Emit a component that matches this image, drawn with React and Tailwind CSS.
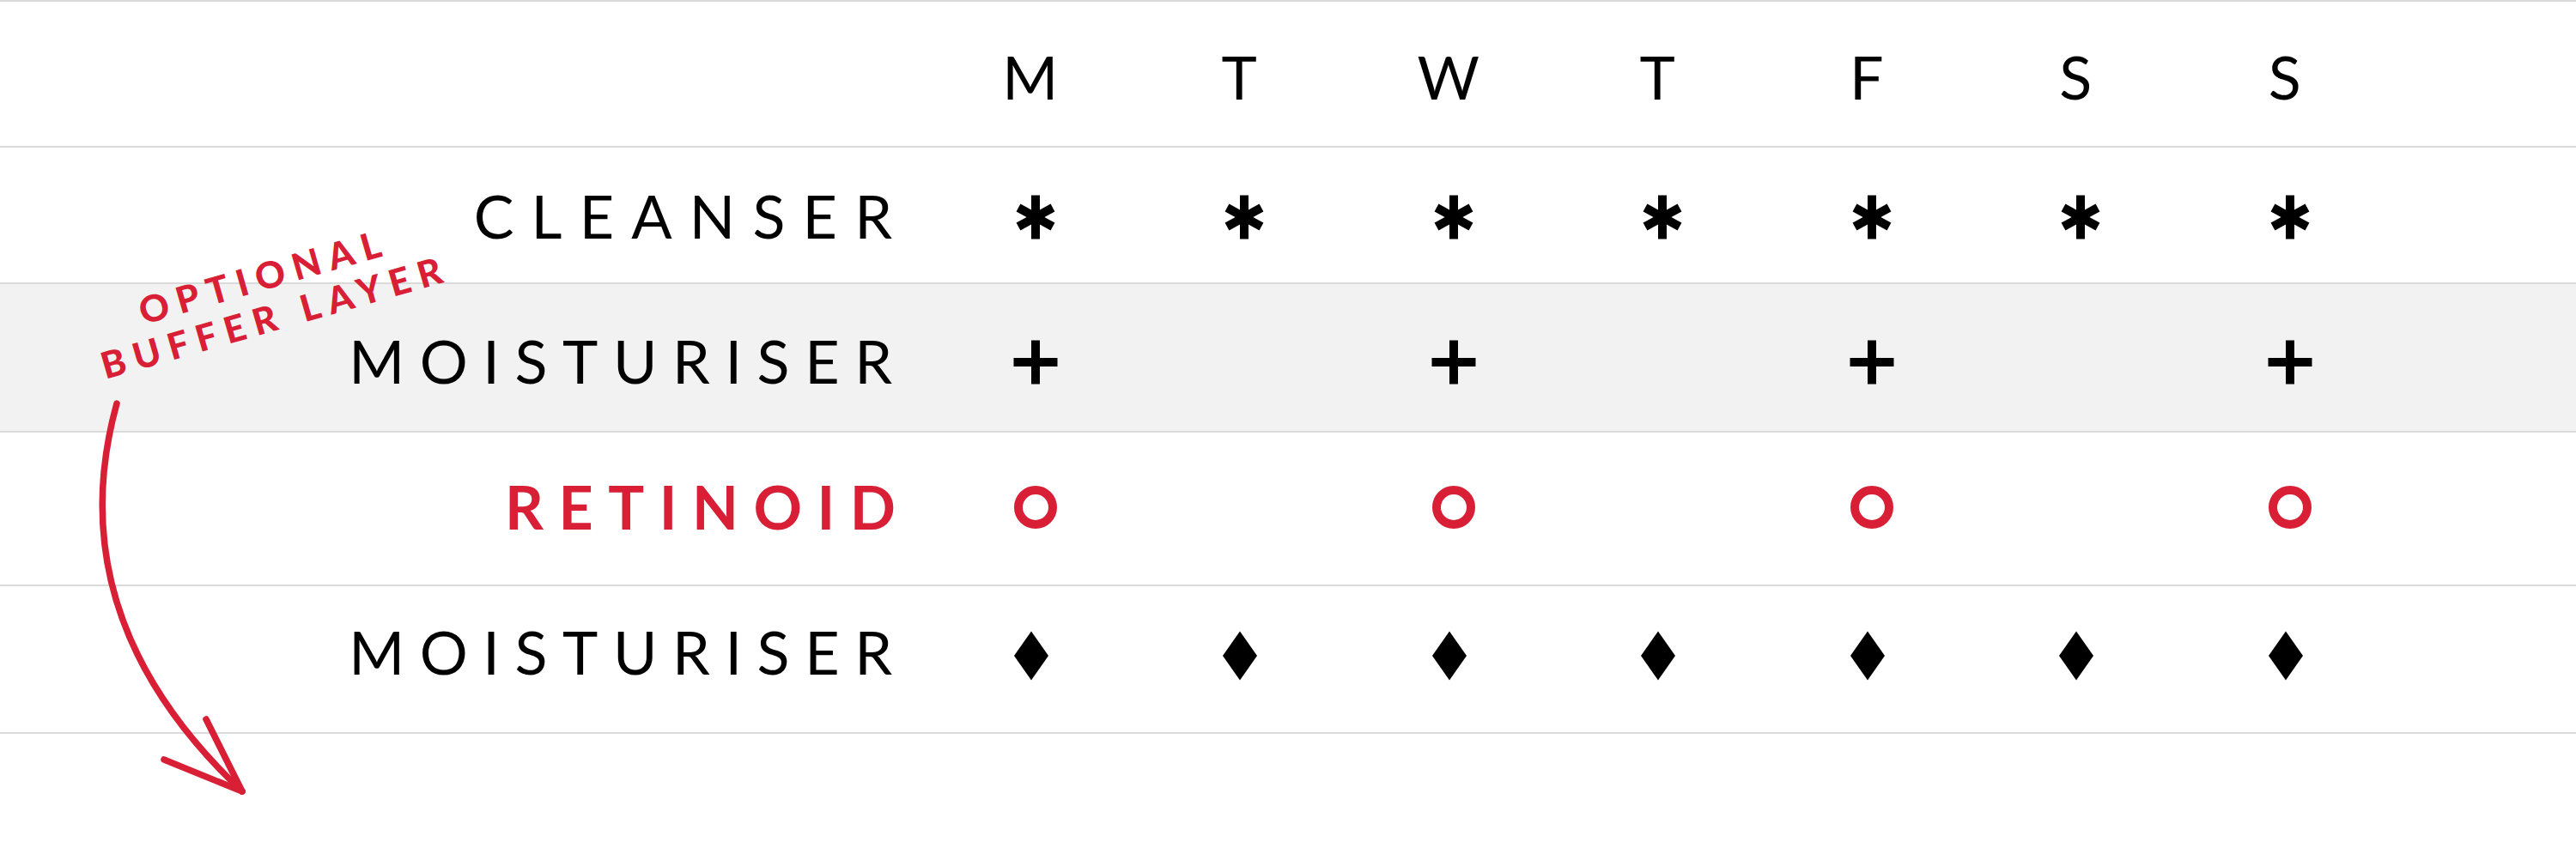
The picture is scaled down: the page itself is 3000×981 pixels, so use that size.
import React from "react";

const RED = "#d81f36";

function Asterisk() {
  return (
    <svg width="50" height="52" viewBox="-25 -26 50 52" className="mt-[4px]">
      <g stroke="#000" strokeWidth="10" strokeLinecap="butt">
        <line x1="0" y1="-25.5" x2="0" y2="25.5" />
        <line x1="-20" y1="-11" x2="20" y2="11" />
        <line x1="-20" y1="11" x2="20" y2="-11" />
      </g>
    </svg>
  );
}

function Plus() {
  return (
    <svg width="52" height="52" viewBox="-26 -26 52 52" className="mt-[4px]">
      <g stroke="#000" strokeWidth="10" strokeLinecap="butt">
        <line x1="0" y1="-25.5" x2="0" y2="25.5" />
        <line x1="-25.5" y1="0" x2="25.5" y2="0" />
      </g>
    </svg>
  );
}

function Ring() {
  return (
    <svg width="52" height="52" viewBox="-26 -26 52 52" className="mt-[2px]">
      <circle cx="0" cy="0" r="20" fill="none" stroke={RED} strokeWidth="10" />
    </svg>
  );
}

function Diamond() {
  return (
    <svg width="42" height="58" viewBox="-21 -29 42 58" className="mt-[10px] mr-[10px]">
      <path d="M0 -28.5 L20 0 L0 28.5 L-20 0 Z" fill="#000" />
    </svg>
  );
}

const DAYS = ["M", "T", "W", "T", "F", "S", "S"];

function Row({ label, labelClass, cells, rowClass }) {
  return (
    <div className={"grid grid-cols-[1084px_repeat(7,243.5px)_1fr] border-b-2 border-[#dadada] " + rowClass}>
      <div className="flex items-center justify-end pr-[45px]">
        <span className={labelClass}>{label}</span>
      </div>
      {cells.map((c, i) => (
        <div key={i} className="flex items-center justify-center">
          {c}
        </div>
      ))}
      <div />
    </div>
  );
}

export default function App() {
  const A = <Asterisk />;
  const P = <Plus />;
  const O = <Ring />;
  const D = <Diamond />;
  const cleanser =
    "text-[70px] leading-none tracking-[0.288em] mr-[-0.288em] font-normal text-black";
  const moist =
    "text-[70px] leading-none tracking-[0.251em] mr-[-0.251em] font-normal text-black";
  const bold =
    "text-[70px] leading-none tracking-[0.25em] mr-[-21.5px] font-bold text-[#d81f36]";

  return (
    <div className="relative w-[3000px] h-[981px] bg-white overflow-hidden font-['Lato',sans-serif]">
      <div className="flex flex-col">
        {/* header */}
        <div className="grid grid-cols-[1084px_repeat(7,243.5px)_1fr] h-[172px] border-t-2 border-b-2 border-[#dadada] pt-[6px]">
          <div />
          {DAYS.map((d, i) => (
            <div key={i} className="flex items-center justify-center pr-[12px]">
              <span className="text-[70px] leading-none font-normal text-black">{d}</span>
            </div>
          ))}
          <div />
        </div>

        <Row
          label="CLEANSER"
          labelClass={cleanser}
          rowClass="h-[159px]"
          cells={[A, A, A, A, A, A, A]}
        />
        <Row
          label="MOISTURISER"
          labelClass={moist}
          rowClass="h-[173px] bg-[#f2f2f2] pt-[7px]"
          cells={[P, null, P, null, P, null, P]}
        />
        <Row
          label="RETINOID"
          labelClass={bold}
          rowClass="h-[179px] pb-[6px]"
          cells={[O, null, O, null, O, null, O]}
        />
        <Row
          label="MOISTURISER"
          labelClass={moist}
          rowClass="h-[172px] pb-[19px]"
          cells={[D, D, D, D, D, D, D]}
        />
      </div>

      {/* annotation text */}
      <div className="absolute left-[309px] top-[346px] -translate-x-1/2 -translate-y-1/2 rotate-[-16deg] text-center whitespace-nowrap text-[43px] leading-[49px] font-black tracking-[0.23em] text-[#d81f36]">
        <div className="mr-[-0.23em]">OPTIONAL</div>
        <div className="mr-[-0.23em]">BUFFER LAYER</div>
      </div>

      {/* arrow */}
      <svg
        className="absolute left-0 top-0 pointer-events-none"
        width="3000"
        height="981"
        viewBox="0 0 3000 981"
      >
        <g fill="none" stroke={RED} strokeWidth="7.5" strokeLinecap="round" strokeLinejoin="round">
          <path d="M136 470 C100 600, 110 760, 282 922" />
          <path d="M240 838 L282 922" />
          <path d="M191 885 L282 922" />
        </g>
      </svg>
    </div>
  );
}
